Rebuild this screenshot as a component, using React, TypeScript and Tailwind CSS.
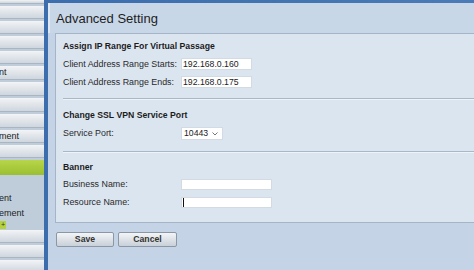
import React from 'react';

const font = { fontFamily: '"Liberation Sans", Arial, sans-serif' };

const NavItem: React.FC<{ h: string; label?: string }> = ({ h, label }) => (
  <div
    className={`${h} shrink-0 flex items-center bg-gradient-to-b from-[#f2f4f6] to-[#cfd6de] border-b border-[#a9b5c1] text-[9px] text-[#222] leading-none whitespace-nowrap`}
  >
    {label && <span className="-ml-[1px]">{label}</span>}
  </div>
);

const Row: React.FC<{ label: string; mt: string; children: React.ReactNode }> = ({ label, mt, children }) => (
  <div className={`flex items-center ${mt}`}>
    <div className="w-[118px] shrink-0 text-[8.9px] text-[#2a2a2a] leading-none">{label}</div>
    {children}
  </div>
);

const TextBox: React.FC<{ w: string; h: string; value?: string; cursor?: boolean }> = ({ w, h, value, cursor }) => (
  <div className={`${w} ${h} bg-white border border-[#d3dae2] flex items-center pl-[1px] text-[8.7px] text-[#222] leading-none`}>
    {cursor && <div className="w-[1px] h-full bg-[#111]" />}
    {value}
  </div>
);

const App: React.FC = () => {
  return (
    <div className="w-[474px] h-[270px] overflow-hidden flex bg-[#c4d4e6]" style={font}>
      {/* sidebar */}
      <div className="w-[44px] h-full shrink-0 overflow-hidden bg-[#bfcddb] flex flex-col gap-[2px]">
        <NavItem h="h-[4px]" />
        <NavItem h="h-[13px]" />
        <NavItem h="h-[13px]" />
        <NavItem h="h-[13px]" />
        <NavItem h="h-[13px]" />
        <NavItem h="h-[14px]" label="nt" />
        <NavItem h="h-[14px]" />
        <NavItem h="h-[14px]" />
        <NavItem h="h-[14px]" />
        <NavItem h="h-[13px]" label="ment" />
        <NavItem h="h-[13px]" />
        <div className="h-[15px] shrink-0 bg-gradient-to-b from-[#b8d54a] to-[#9bbf30]" />
        <div className="h-[51px] shrink-0 flex flex-col text-[9px] text-[#222] leading-none whitespace-nowrap pt-[17px]">
          <span className="-ml-[1px]">ent</span>
          <span className="-ml-[1px] mt-[6px]">ement</span>
          <span className="mt-[3px] w-[6px] h-[8px] bg-[#b4d23c] text-[7px] leading-[8px] text-[#334] text-center">+</span>
        </div>
        <NavItem h="h-[13px]" />
        <NavItem h="h-[13px]" />
        <NavItem h="h-[13px]" />
      </div>

      {/* blue divider */}
      <div className="w-[4px] h-full shrink-0 bg-[#3c6dac]" />

      {/* main */}
      <div className="flex-1 flex flex-col min-w-0">
        <div className="h-[3px] shrink-0 bg-gradient-to-r from-[#3c6dac] to-[#4a7bb8]" />
        <div className="h-[30px] shrink-0 flex items-center border-l-2 border-[#dfe8f2] bg-[#c8d7e8] pl-[6px]">
          <span className="text-[13px] text-[#1e1e1e] leading-none">Advanced Setting</span>
        </div>

        <div className="pl-[7px]">
          <div className="bg-[#dbe5f0] border-t border-l border-b border-[#a5b4c6] flex flex-col pb-[14px]">
            <div className="pl-[7px] mt-[6px] h-[12px] flex items-center text-[8.7px] font-bold text-[#1c1c1c] leading-none">
              Assign IP Range For Virtual Passage
            </div>
            <div className="pl-[7px]">
              <Row label="Client Address Range Starts:" mt="mt-[6px]">
                <TextBox w="w-[71px]" h="h-[12px]" value="192.168.0.160" />
              </Row>
              <Row label="Client Address Range Ends:" mt="mt-[6px]">
                <TextBox w="w-[71px]" h="h-[12px]" value="192.168.0.175" />
              </Row>
            </div>
            <div className="ml-[7px] mt-[10px] h-[2px] border-t border-[#a9b7c7] bg-[#eef3f8]" />

            <div className="pl-[7px] mt-[9px] h-[12px] flex items-center text-[8.7px] font-bold text-[#1c1c1c] leading-none">
              Change SSL VPN Service Port
            </div>
            <div className="pl-[7px]">
              <Row label="Service Port:" mt="mt-[6px]">
                <div className="w-[42px] h-[13px] bg-white border border-[#d3dae2] flex items-center justify-between pl-[2px] pr-[4px] text-[8.7px] text-[#222] leading-none">
                  <span>10443</span>
                  <svg width="6" height="4" viewBox="0 0 6 4" fill="none">
                    <path d="M0.5 0.5 L3 3 L5.5 0.5" stroke="#666" strokeWidth="0.9" />
                  </svg>
                </div>
              </Row>
            </div>
            <div className="ml-[7px] mt-[11px] h-[2px] border-t border-[#a9b7c7] bg-[#eef3f8]" />

            <div className="pl-[7px] mt-[8px] h-[12px] flex items-center text-[8.7px] font-bold text-[#1c1c1c] leading-none">
              Banner
            </div>
            <div className="pl-[7px]">
              <Row label="Business Name:" mt="mt-[6px]">
                <TextBox w="w-[91px]" h="h-[11px]" />
              </Row>
              <Row label="Resource Name:" mt="mt-[7px]">
                <TextBox w="w-[91px]" h="h-[11px]" cursor />
              </Row>
            </div>
          </div>

          <div className="flex gap-[4px] mt-[9px] ml-[1px]">
            <button className="w-[58px] h-[15px] rounded-[2px] border border-[#8b97a5] bg-gradient-to-b from-[#f3f5f7] to-[#c9d0d8] text-[8.7px] font-bold text-[#333] leading-none">
              Save
            </button>
            <button className="w-[59px] h-[15px] rounded-[2px] border border-[#8b97a5] bg-gradient-to-b from-[#f3f5f7] to-[#c9d0d8] text-[8.7px] font-bold text-[#333] leading-none">
              Cancel
            </button>
          </div>
        </div>
      </div>
    </div>
  );
};

export default App;
